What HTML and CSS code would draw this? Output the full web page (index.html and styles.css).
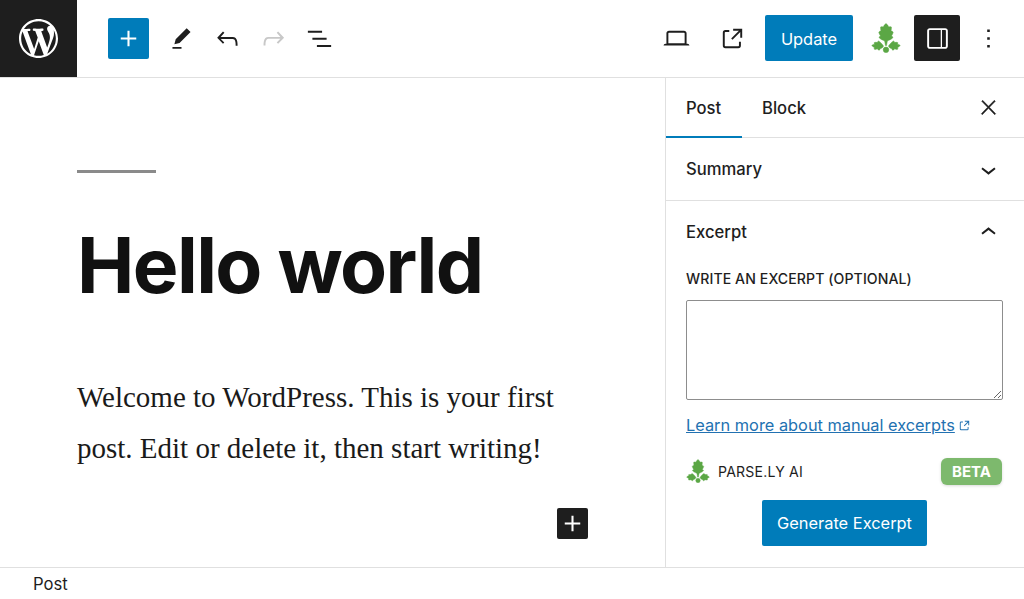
FILE: index.html
```html
<!DOCTYPE html>
<html lang="en">
<head>
<meta charset="utf-8">
<title>Edit Post</title>
<link rel="stylesheet" href="styles.css">
</head>
<body>
<div class="app">
  <header class="topbar">
    <a class="wp-logo"><svg class="logo-svg" viewBox="0 0 20 20"><path d="M20 10c0-5.51-4.49-10-10-10C4.48 0 0 4.49 0 10c0 5.52 4.48 10 10 10 5.51 0 10-4.48 10-10zM7.78 15.37L4.37 6.22c.55-.02 1.17-.08 1.17-.08.5-.06.44-1.13-.06-1.11 0 0-1.45.11-2.37.11-.18 0-.37 0-.58-.01C4.12 2.69 6.87 1.11 10 1.11c2.33 0 4.45.87 6.05 2.34-.68-.11-1.65.39-1.65 1.58 0 .74.45 1.36.9 2.1.35.61.55 1.36.55 2.46 0 1.49-1.4 5-1.4 5l-3.03-8.37c.54-.02.82-.17.82-.17.5-.05.44-1.25-.06-1.22 0 0-1.44.12-2.38.12-.87 0-2.33-.12-2.33-.12-.5-.03-.56 1.2-.06 1.22l.92.08 1.26 3.41zM17.41 10c.24-.64.74-1.87.43-4.25.7 1.29 1.05 2.71 1.05 4.25 0 3.29-1.73 6.24-4.4 7.78.97-2.59 1.94-5.2 2.92-7.78zM6.1 18.09C3.12 16.65 1.11 13.53 1.11 10c0-1.3.23-2.48.72-3.59C3.25 10.3 4.67 14.2 6.1 18.09zm4.03-6.63l2.58 6.98c-.86.29-1.76.45-2.71.45-.79 0-1.57-.11-2.29-.33.81-2.38 1.62-4.74 2.42-7.1z"/></svg></a>
    <div class="tools-left">
      <button class="icon-btn inserter"><svg class="icon" viewBox="0 0 24 24"><path d="M18 11.2h-5.2V6h-1.6v5.2H6v1.6h5.2V18h1.6v-5.2H18z"/></svg></button>
      <button class="icon-btn"><svg class="icon" viewBox="0 0 24 24"><path d="m19 7-3-3-8.5 8.5-1 4 4-1L19 7Zm-7 11.5H5V20h7v-1.5Z"/></svg></button>
      <button class="icon-btn"><svg class="icon" viewBox="0 0 24 24"><path d="M18.3 11.7c-.6-.6-1.4-.9-2.3-.9H6.7l2.9-3.3-1.1-1-4.5 5L8.5 16l1-1-2.7-2.7H16c.5 0 .9.2 1.3.5 1 1 1 3.4 1 4.5v.3h1.5v-.2c0-1.5 0-4.3-1.5-5.7z"/></svg></button>
      <button class="icon-btn disabled"><svg class="icon" viewBox="0 0 24 24"><path d="M15.6 6.5l-1.1 1 2.9 3.3H8c-.9 0-1.7.3-2.3.9-1.4 1.5-1.4 4.2-1.4 5.6v.2h1.5v-.3c0-1.1 0-3.5 1-4.5.3-.3.7-.5 1.3-.5h9.2L14.5 15l1.1 1.1 4.6-4.6-4.6-5z"/></svg></button>
      <button class="icon-btn"><svg class="icon" viewBox="0 0 24 24"><path d="M3 6h11v1.5H3V6Zm3.5 5.5h11V13h-11v-1.5ZM21 17H10v1.5h11V17Z"/></svg></button>
    </div>
    <div class="tools-right">
      <button class="icon-btn"><svg class="icon" viewBox="0 0 24 24"><path d="M20.5 16h-.7V8c0-1.1-.9-2-2-2H6.2c-1.1 0-2 .9-2 2v8h-.7c-.8 0-1.5.7-1.5 1.5h20c0-.8-.7-1.5-1.5-1.5zM5.7 8c0-.3.2-.5.5-.5h11.6c.3 0 .5.2.5.5v7.6H5.7V8z"/></svg></button>
      <button class="icon-btn"><svg class="icon" viewBox="0 0 24 24"><path d="M19.5 4.5h-7V6h4.44l-5.97 5.97 1.06 1.06L18 7.06v4.44h1.5v-7Zm-13 1a2 2 0 0 0-2 2v10a2 2 0 0 0 2 2h10a2 2 0 0 0 2-2v-3H17v3a.5.5 0 0 1-.5.5h-10a.5.5 0 0 1-.5-.5v-10a.5.5 0 0 1 .5-.5h3V5.5h-3Z"/></svg></button>
      <button class="btn update">Update</button>
      <button class="icon-btn leaf-btn"><svg class="leaf-lg" viewBox="0 0 30 30"><use href="#leaf"/></svg></button>
      <button class="icon-btn settings"><svg class="icon" viewBox="0 0 24 24"><path fill-rule="evenodd" d="M18 4H6c-1.1 0-2 .9-2 2v12c0 1.1.9 2 2 2h12c1.1 0 2-.9 2-2V6c0-1.1-.9-2-2-2zM5.5 18V6c0-.3.2-.5.5-.5h8.5v13H6c-.3 0-.5-.2-.5-.5zm13 0c0 .3-.2.5-.5.5h-2.5v-13H18c.3 0 .5.2.5.5v12z"/></svg></button>
      <button class="icon-btn"><svg class="icon" viewBox="0 0 24 24"><path d="M13 19h-2v-2h2v2zm0-6h-2v-2h2v2zm0-6h-2V5h2v2z"/></svg></button>
    </div>
  </header>

  <div class="body">
    <main class="editor">
      <hr class="sep">
      <h1 class="title">Hello world</h1>
      <p class="para">Welcome to WordPress. This is your first post. Edit or delete it, then start writing!</p>
      <button class="block-add"><svg class="icon" viewBox="0 0 24 24"><path d="M18 11.2h-5.2V6h-1.6v5.2H6v1.6h5.2V18h1.6v-5.2H18z"/></svg></button>
    </main>

    <aside class="sidebar">
      <div class="tabs">
        <div class="tab active">Post</div>
        <div class="tab">Block</div>
        <button class="icon-btn close"><svg class="close-svg" viewBox="0 0 24 24"><path d="M13 11.8l6.1-6.3-1-1-6.1 6.2-6.1-6.2-1 1 6.1 6.3-6.5 6.7 1 1 6.5-6.6 6.5 6.6 1-1z"/></svg></button>
      </div>
      <section class="panel summary">
        <span>Summary</span>
        <svg class="icon" viewBox="0 0 24 24"><path d="M17.5 11.6L12 16l-5.5-4.4.9-1.2L12 14l4.5-3.6 1 1.2z"/></svg>
      </section>
      <section class="excerpt">
        <div class="panel-head">
          <span>Excerpt</span>
          <svg class="icon" viewBox="0 0 24 24"><path d="M6.5 12.4L12 8l5.5 4.4-.9 1.2L12 10l-4.5 3.6-1-1.2z"/></svg>
        </div>
        <label class="field-label">WRITE AN EXCERPT (OPTIONAL)</label>
        <textarea class="field"></textarea>
        <div class="learn"><a class="link">Learn more about manual excerpts</a><svg class="ext" viewBox="0 0 24 24"><path d="M19.5 4.5h-7V6h4.44l-5.97 5.97 1.06 1.06L18 7.06v4.44h1.5v-7Zm-13 1a2 2 0 0 0-2 2v10a2 2 0 0 0 2 2h10a2 2 0 0 0 2-2v-3H17v3a.5.5 0 0 1-.5.5h-10a.5.5 0 0 1-.5-.5v-10a.5.5 0 0 1 .5-.5h3V5.5h-3Z"/></svg></div>
        <div class="ai-row">
          <svg class="leaf-sm" viewBox="0 0 30 30"><use href="#leaf"/></svg>
          <span class="ai-name">PARSE.LY AI</span>
          <span class="beta">BETA</span>
        </div>
        <button class="btn generate">Generate Excerpt</button>
      </section>
    </aside>
  </div>

  <footer class="footer">Post</footer>
</div>

<svg class="defs" width="0" height="0">
  <defs>
    <path id="leaflet" d="M12.500 23C11 21 9.500 19 7.500 18C7 18.300 6.500 18.800 6.200 19.500C5.200 19.200 4 19.200 3.200 19.700C3.200 20.200 3.300 20.700 3.500 21.200C2.500 21.300 1.300 21.700 .8 22.500C1.300 23.300 2.200 24 3.300 24.300C3.100 25 3.100 25.700 3.400 26.300C4.300 26.500 5.400 26.300 6.200 25.800C6.700 26.500 7.300 27 8.100 27.200C8.800 26.800 9.300 26.200 9.500 25.500C10.800 25.400 11.900 24.500 12.500 23Z"/>
    <g id="leaf" fill="#5ba745" stroke="#5ba745" stroke-width=".5" stroke-linejoin="round">
      <path transform="matrix(.9 0 0 1 1.500 0)" d="M15 .5C16.500 1.500 17.500 2.500 18 4C19 3.500 20.500 3.500 21 4C21 5.500 21 7 20.500 8C21.800 8 22.800 8.500 23 9.500C22.500 11 21.800 12 21 13C21.800 13.200 22.500 13.700 22.800 14.500C21 16.500 18.500 17 16.500 18L15.600 22.500H14.400L13.500 18C11.500 17 9 16.500 7.200 14.500C7.500 13.700 8.200 13.200 9 13C8.200 12 7.500 11 7 9.500C7.200 8.500 8.200 8 9.500 8C9 7 9 5.500 9 4C9.500 3.500 11 3.500 12 4C12.500 2.500 13.500 1.500 15 .5Z"/>
      <use href="#leaflet"/>
      <use href="#leaflet" transform="matrix(-1 0 0 1 30 0)"/>
      <circle cx="15" cy="26.800" r="2.800"/>
    </g>
  </defs>
</svg>
</body>
</html>
```
FILE: styles.css
```css
* { box-sizing: border-box; }
html, body { margin: 0; padding: 0; height: 100%; }
body { font-family: Inter, "Liberation Sans", sans-serif; color: #1e1e1e; background: #fff; overflow: hidden; }
button { font: inherit; border: 0; background: none; color: inherit; padding: 0; margin: 0; }
svg { display: block; fill: currentColor; }
.defs { position: absolute; }

.app { display: flex; flex-direction: column; height: 599px; width: 1024px; }

.topbar { height: 78px; flex: none; display: flex; align-items: flex-start; border-bottom: 1px solid #e0e0e0; }
.wp-logo { width: 77px; height: 77px; background: #1e1e1e; color: #fff; display: flex; align-items: center; justify-content: center; flex: none; }
.logo-svg { width: 39px; height: 39px; }
.icon { width: 31px; height: 31px; flex: none; }
.icon-btn { width: 31px; height: 31px; display: flex; align-items: center; justify-content: center; flex: none; border-radius: 2px; }
.tools-left { display: flex; align-items: center; height: 77px; margin-left: 30.5px; gap: 15px; }
.tools-left .inserter { width: 41px; height: 41px; background: #007cba; color: #fff; margin-right: 2.5px; }
.disabled { color: #c8c8c8; }
.tools-right { margin-left: auto; display: flex; align-items: center; height: 76px; }
.tools-right .icon-btn:nth-child(2) { margin-left: 25px; }
.btn { background: #007cba; color: #fff; border-radius: 2px; font-size: 16.4px; font-weight: 400; display: flex; align-items: center; justify-content: center; }
.update { width: 88px; height: 46px; margin-left: 17px; padding-top: 1px; }
.leaf-btn { width: 30px; height: 31px; margin-left: 18px; }
.leaf-lg { width: 30px; height: 30px; }
.settings.icon-btn { width: 46px; height: 46px; background: #1e1e1e; color: #fff; margin-left: 13px; }
.tools-right .icon-btn:last-child { margin: 0 20px 0 13px; }

.body { flex: 1; display: flex; min-height: 0; }
.editor { flex: 1; min-width: 0; padding: 92px 77px 0 77px; display: flex; flex-direction: column; }
.sep { width: 79px; height: 2.500px; margin: 0; background: #8a8a8a; border: 0; flex: none; }
.title { margin: 50px 0 0; font-size: 76.8px; line-height: 86px; font-weight: 700; color: #111; letter-spacing: -1.6px; }
.para { margin: 63px 0 0; font-family: "Liberation Serif", serif; font-size: 29px; line-height: 51px; color: #1a1a1a; }
.block-add { width: 31px; height: 31px; background: #1e1e1e; color: #fff; border-radius: 2px; align-self: flex-end; margin-top: 34px; }

.sidebar { width: 359px; flex: none; border-left: 1px solid #e0e0e0; display: flex; flex-direction: column; font-size: 16.64px; font-weight: 500; }
.tabs { height: 60px; flex: none; display: flex; align-items: center; border-bottom: 1px solid #e0e0e0; }
.tab { height: 60px; padding: 0 20px; display: flex; align-items: center; }
.tab.active { width: 76px; box-shadow: inset 0 -2px 0 #007cba; }
.close { margin-left: auto; margin-right: 20px; }
.close-svg { width: 23px; height: 23px; stroke: currentColor; stroke-width: .5; }
.panel { height: 63px; flex: none; display: flex; align-items: center; justify-content: space-between; padding: 0 20px; border-bottom: 1px solid #e0e0e0; }
.excerpt { flex: 1; padding: 0 20px; display: flex; flex-direction: column; min-height: 0; }
.panel-head { height: 62px; flex: none; display: flex; align-items: center; justify-content: space-between; }
.field-label { font-size: 14.080px; line-height: 18px; margin-top: 7px; letter-spacing: .1px; }
.field { display: block; width: 317px; height: 100px; margin: 12px 0 0; border: 1px solid #8d8d8d; border-radius: 2px; background: #fff; resize: vertical; flex: none; }
.learn { display: flex; align-items: center; margin-top: 14px; height: 22px; font-weight: 400; }
.link { color: #2271b1; text-decoration: underline; font-size: 16.35px; }
.ext { width: 15px; height: 15px; margin-left: 2px; fill: #2271b1; }
.ai-row { display: flex; align-items: center; margin-top: 21px; height: 28px; width: 316px; font-weight: 400; }
.leaf-sm { width: 24px; height: 24px; flex: none; }
.ai-name { font-size: 14.080px; margin-left: 8px; letter-spacing: .2px; }
.beta { margin-left: auto; width: 61px; height: 27px; display: flex; align-items: center; justify-content: center; background: #7db96d; color: #fff; border-radius: 6px; font-weight: 700; font-size: 15px; box-shadow: 0 1px 3px rgba(0,0,0,.15); }
.generate { width: 165px; height: 46px; align-self: center; margin-top: 15px; margin-right: 1px; }

.footer { height: 32px; flex: none; padding: 1px 0 0 33px; font-size: 16.64px; display: flex; align-items: center; border-top: 1px solid #e0e0e0; }
```
